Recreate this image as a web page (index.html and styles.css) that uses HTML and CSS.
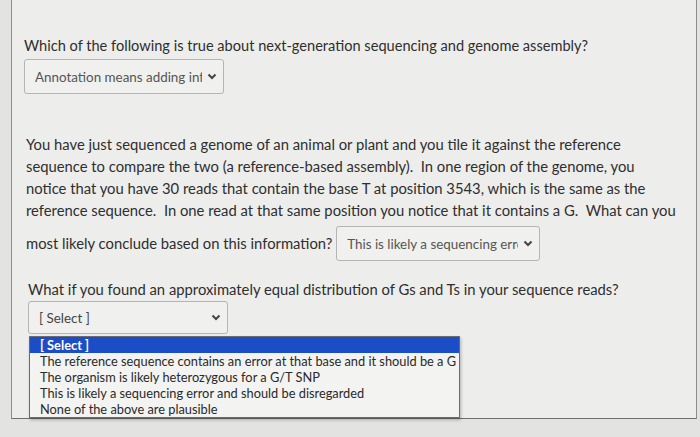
FILE: index.html
```html
<html>
<head>
<title>Quiz - Genome assembly</title>
<link rel="stylesheet" href="styles.css">
</head>
<body>

<div class="panel">

  <div class="question first">
    <p class="prompt">Which of the following is true about next-generation sequencing and genome assembly?</p>
    <div class="select">
      <span class="select-text">Annotation means adding information to a genome</span>
      <svg class="chevron" width="10" height="7" viewBox="0 0 10 7"><path d="M1.5 1.5 L5 5 L8.5 1.5" fill="none" stroke="#444" stroke-width="2"/></svg>
    </div>
  </div>

  <div class="question passage">
    <p class="prompt">You have just sequenced a genome of an animal or plant and you tile it against the reference<br>
    sequence to compare the two (a reference-based assembly).&nbsp; In one region of the genome, you<br>
    notice that you have 30 reads that contain the base T at position 3543, which is the same as the<br>
    reference sequence.&nbsp; In one read at that same position you notice that it contains a G.&nbsp; What can you<br>
    most likely conclude based on this information?
    <span class="select inline">
      <span class="select-text">This is likely a sequencing error and should be disregarded</span>
      <svg class="chevron" width="10" height="7" viewBox="0 0 10 7"><path d="M1.5 1.5 L5 5 L8.5 1.5" fill="none" stroke="#444" stroke-width="2"/></svg>
    </span></p>
  </div>

  <div class="question last">
    <p class="prompt">What if you found an approximately equal distribution of Gs and Ts in your sequence reads?</p>
    <div class="select-wrap">
      <div class="select open">
        <span class="select-text">[ Select ]</span>
        <svg class="chevron" width="10" height="7" viewBox="0 0 10 7"><path d="M1.5 1.5 L5 5 L8.5 1.5" fill="none" stroke="#444" stroke-width="2"/></svg>
      </div>
      <ul class="options">
        <li class="selected">[ Select ]</li>
        <li>The reference sequence contains an error at that base and it should be a G</li>
        <li>The organism is likely heterozygous for a G/T SNP</li>
        <li>This is likely a sequencing error and should be disregarded</li>
        <li>None of the above are plausible</li>
      </ul>
    </div>
  </div>

</div>

</body>
</html>
```

FILE: styles.css
```css
body {
  margin:0;
  background:#e3e3e1;
  font-family:Lato, "Open Sans", sans-serif;
  color:#2f2f2f;
}

.panel {
  margin-left:11px;
  width:686px;
  height:419px;
  background:#ededeb;
  border-left:1px solid #8d8d8d;
  border-right:1px solid #8d8d8d;
  border-bottom:1px solid #6f6f6f;
  box-sizing:border-box;
}

.prompt {
  margin:0;
  font-size:14.8px;
  line-height:22px;
  white-space:nowrap;
}

.question.first .prompt {
  font-size:14.6px;
}

.question.first {
  padding:35px 0 0 12px;
}

.question.passage {
  padding:39px 0 0 14px;
}

.question.last {
  padding:17px 0 0 16px;
}

.select {
  display:flex;
  align-items:center;
  width:200px;
  height:35px;
  box-sizing:border-box;
  margin-top:2px;
  padding:0 6px 0 10px;
  background:#f0f0ee;
  border:1px solid #b4b4b2;
  border-radius:3px;
  font-size:13.4px;
  color:#555;
}

.select.inline {
  display:inline-flex;
  vertical-align:baseline;
  width:204px;
  height:35px;
  margin:5px 0 0 0;
}

.select-text {
  flex:1;
  overflow:hidden;
  white-space:nowrap;
  margin-right:5px;
}

.chevron {
  flex:none;
}

.select-wrap {
  position:relative;
  width:200px;
}

.select.open {
  height:33px;
  margin-top:1px;
  padding-left:10px;
}

.select.open .select-text {
  color:#444;
}

.options {
  position:absolute;
  top:35px;
  left:1px;
  width:429px;
  margin:0;
  padding:0;
  list-style:none;
  background:#f3f3f1;
  border:1px solid #6a6a72;
  box-shadow:1px 2px 3px rgba(0,0,0,0.25);
  font-size:12.8px;
  color:#2a2a2a;
}

.options li {
  height:16px;
  line-height:16px;
  padding-left:10px;
  white-space:nowrap;
}

.options li.selected {
  background:#1b4ec6;
  color:#fff;
  font-weight:bold;
}
```
